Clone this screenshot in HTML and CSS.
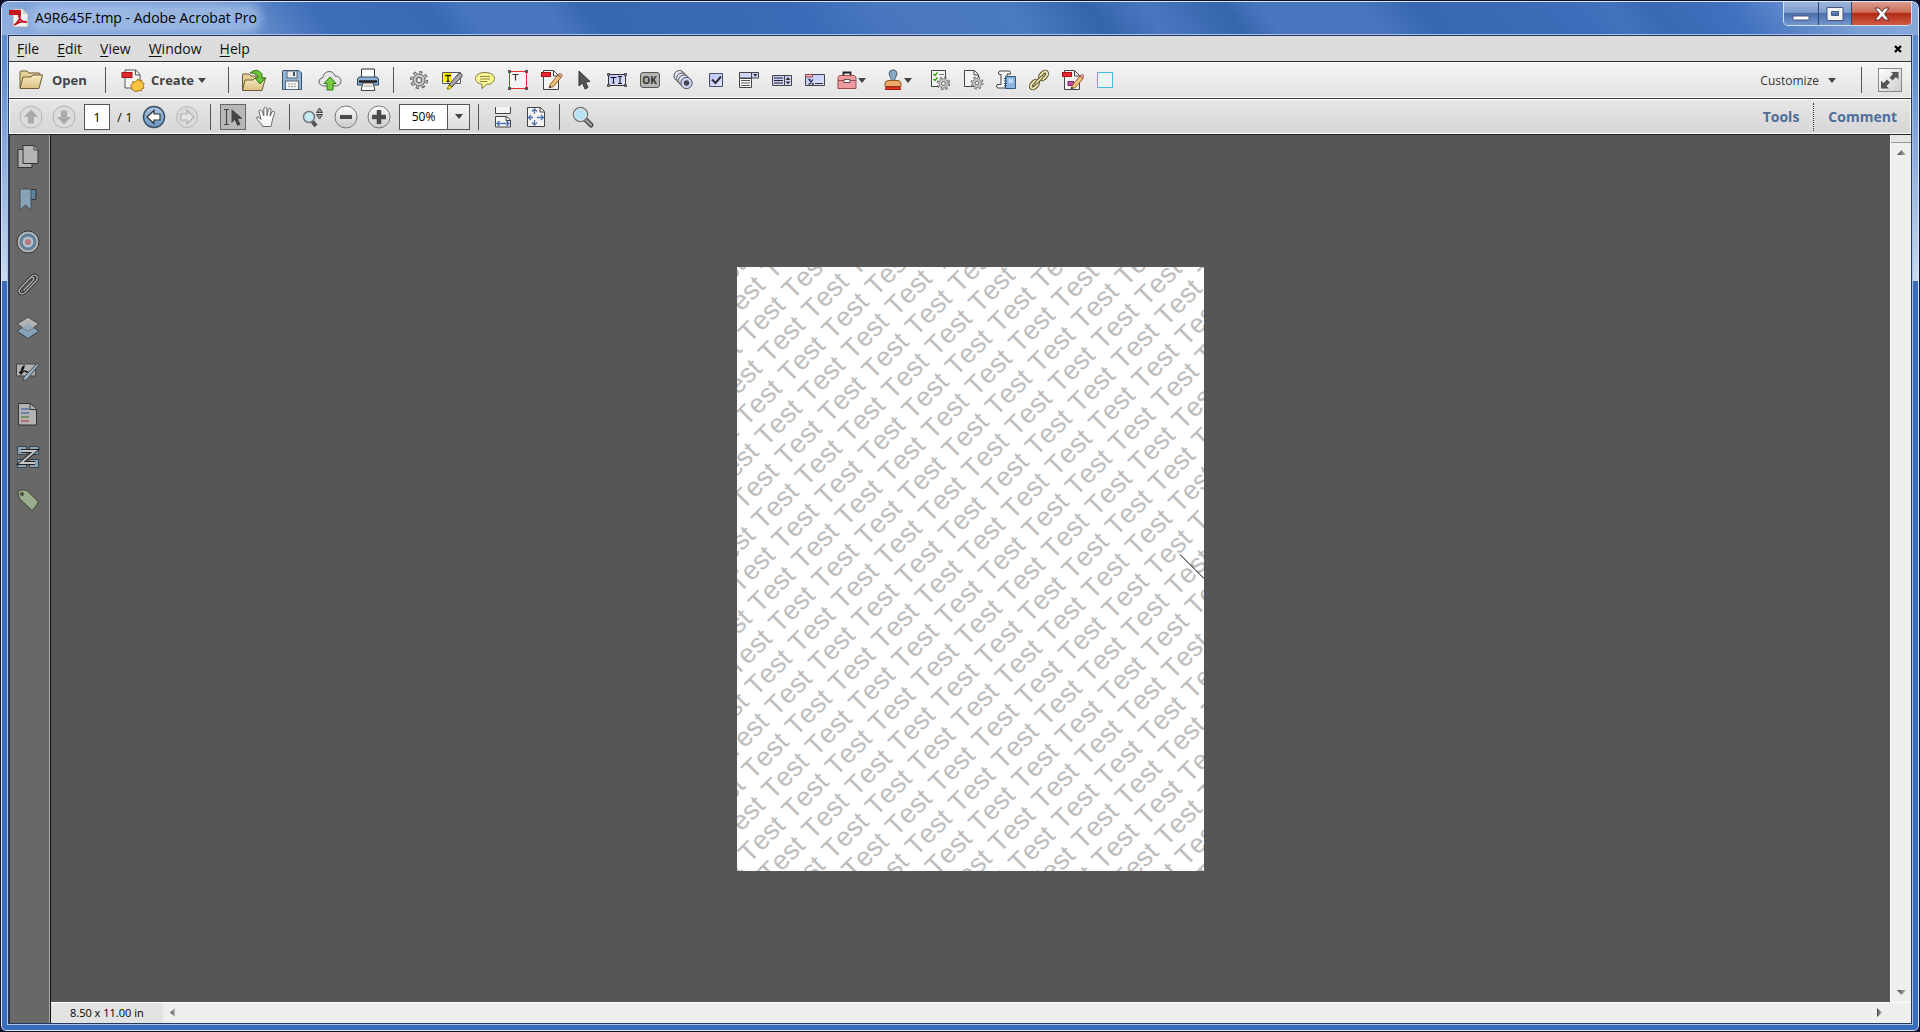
FILE: index.html
```html
<!DOCTYPE html>
<html lang="en">
<head>
    <meta charset="UTF-8">
    <meta name="viewport" content="width=device-width, initial-scale=1.0">
    <title>A9R645F.tmp - Adobe Acrobat Pro</title>
    <link rel="stylesheet" href="styles.css">
</head>
<body>
    <!-- shared gradients and shapes -->
    <svg class="defs" width="0" height="0" aria-hidden="true">
        <defs>
            <linearGradient id="gFolder" x1="0" y1="0" x2="0" y2="1"><stop offset="0" stop-color="#f7ebc0"/><stop offset="1" stop-color="#dcc183"/></linearGradient>
            <linearGradient id="gRound" x1="0" y1="0" x2="0" y2="1"><stop offset="0" stop-color="#fcfcfc"/><stop offset="1" stop-color="#c9c9c9"/></linearGradient>
            <linearGradient id="gBlue" x1="0" y1="0" x2="0" y2="1"><stop offset="0" stop-color="#a9c8e6"/><stop offset="1" stop-color="#6d97c4"/></linearGradient>
            <linearGradient id="gField" x1="0" y1="0" x2="1" y2="1"><stop offset="0" stop-color="#b9c0fa"/><stop offset="1" stop-color="#e4e7ff"/></linearGradient>
            <linearGradient id="gArrow" x1="0" y1="0" x2="1" y2="0"><stop offset="0" stop-color="#444"/><stop offset="1" stop-color="#bbb"/></linearGradient>
            <g id="gear">
                <circle r="7.2" fill="none" stroke="#555" stroke-width="3.6" stroke-dasharray="3 2.65"/>
                <circle r="6" fill="#bdbdbd" stroke="#555"/>
                <circle r="7" fill="none" stroke="#bdbdbd" stroke-width="2.2" stroke-dasharray="2 3.5" stroke-dashoffset="-.4"/>
                <circle r="5.4" fill="#c4c4c4"/>
                <circle r="2.6" fill="#eee" stroke="#666" stroke-width="1.3"/>
            </g>
            <path id="docPage" d="M4.500 2.500h10l5 5v14h-15z" fill="#f4f4f4" stroke="#444"/>
            <g id="pencil">
                <path d="M0 0l1.500-4 7.500-9 3 2.500-7.500 9z" fill="#f2c078" stroke="#80522c" stroke-width=".9"/>
                <path d="M9-13l3 2.500 1-1.200q.6-1.500-.6-2.200-1.200-.8-2.300-.4z" fill="#f0a0a0" stroke="#80522c" stroke-width=".7"/>
                <path d="M0 0l.8-2.200 1.200 1z" fill="#222"/>
            </g>
        </defs>
    </svg>

    <div class="window">
        <header class="titlebar">
            <svg class="app-icon" viewBox="0 0 20 20"><path d="M4 1h10l5 5v13H4z" fill="#f2f2f2" stroke="#aaa"/><path d="M14 1l5 5h-5z" fill="#c9c9c9"/><path d="M0 2h12v5H0z" fill="#c8141c"/><path d="M5 17c3-1 6-6 6-9 0-2-1.500-1.500-1 .5 1 4 4 6 8 5.500-3-1-8 0-12 2.500" fill="none" stroke="#c01018" stroke-width="1.700"/></svg>
            <h1 class="title">A9R645F.tmp - Adobe Acrobat Pro</h1>
            <div class="caption-buttons">
                <button class="caption-btn minimize" aria-label="Minimize"><svg width="18" height="8" viewBox="0 0 18 8"><rect x="1" y="2" width="16" height="4" rx="1" fill="#fff" stroke="#46557a"/></svg></button>
                <button class="caption-btn maximize" aria-label="Maximize"><svg width="18" height="14" viewBox="0 0 18 14"><path fill-rule="evenodd" d="M1 .5h16v13H1zM5.500 4.500h7v4h-7z" fill="#f4f4f4" stroke="#46557a"/></svg></button>
                <button class="caption-btn close" aria-label="Close"><svg width="16" height="14" viewBox="0 0 16 14"><path d="M1 1h4l3 3.500L11 1h4l-4.500 6 4.500 6h-4L8 9.500 5 13H1l4.500-6z" fill="#fff" stroke="#5b3038"/></svg></button>
            </div>
        </header>

        <div class="client">
            <nav class="menubar">
                <button class="menu"><u>F</u>ile</button>
                <button class="menu"><u>E</u>dit</button>
                <button class="menu"><u>V</u>iew</button>
                <button class="menu"><u>W</u>indow</button>
                <button class="menu"><u>H</u>elp</button>
                <button class="close-doc" aria-label="Close document"><svg width="8" height="8" viewBox="0 0 8 8"><path d="M1 1l6 6M7 1L1 7" stroke="#000" stroke-width="2.400"/></svg></button>
            </nav>

            <div class="toolbar">
                <button class="label-btn open"><svg class="ico" viewBox="0 0 24 24"><path d="M1 20V4q0-1 1-1h6l2 2h10q1 0 1 1v3" fill="#e4cf98" stroke="#6d5a33"/><path d="M1 20.500L4 9h8l2-2h9.500L20 20.500z" fill="url(#gFolder)" stroke="#6d5a33"/></svg><span>Open</span></button>
                <span class="sep"></span>
                <button class="label-btn create"><svg class="ico" viewBox="0 0 24 24"><path d="M4 2h11l4 4.500V20H4z" fill="#f4f4f4" stroke="#555"/><path d="M14.500 2v5H19" fill="none" stroke="#555"/><rect x="1" y="4.500" width="10" height="5" fill="#dd2a35" stroke="#a11"/><path d="M17 11l1.500 2 2.300-.7.200 2.400 2.200 1-1.200 2.100 1 2.200-2.300.7-.4 2.300-2.300-.5L14 24l-1.200-2-2.300-.4.400-2.300-1.500-1.900 2-1.300.3-2.400 2.400.4z" fill="#fbc343" stroke="#a9751a"/></svg><span>Create</span><i class="arrow"></i></button>
                <span class="sep"></span>
                <div class="group wide">
                    <button class="tool" aria-label="Open from"><svg class="ico" viewBox="0 0 24 24"><path d="M.5 22V7q0-1 1-1H7l2 2h8v3" fill="#e4cf98" stroke="#6d5a33"/><path d="M.5 22.500L3 12h8l2-2h10.500l-3.500 12.500z" fill="url(#gFolder)" stroke="#6d5a33"/><path d="M8 5q7-6 12 1v4h3.500L18 16l-5-6h3q0-5-8-5z" fill="#6cc33a" stroke="#2f7a12"/></svg></button>
                    <button class="tool" aria-label="Save"><svg class="ico" viewBox="0 0 24 24"><path d="M3 2.500h16l2.500 2.500v16.500h-19V3z" fill="#92b4d6" stroke="#34516f"/><rect x="7" y="3" width="10" height="7" fill="#eee" stroke="#567"/><rect x="13" y="4" width="2" height="4" fill="#34516f"/><rect x="5.500" y="13" width="13" height="8.500" fill="#f6f6f6" stroke="#567"/><path d="M8 16h8M8 18.500h8" stroke="#999" stroke-dasharray="2 1"/></svg></button>
                    <button class="tool" aria-label="Upload"><svg class="ico" viewBox="0 0 24 24"><path d="M5.500 18q-5-1-4.500-5 .5-3 4-3.500Q5.500 4 11 3.500q5 0 6 4.500 5 .2 6 4.500 0 4.500-4.500 5.500z" fill="#e6e6e6" stroke="#666"/><path d="M12 9l6 6.500h-3v6.500H9v-6.500H6z" fill="#78cb45" stroke="#2f7a12"/></svg></button>
                    <button class="tool" aria-label="Print"><svg class="ico" viewBox="0 0 24 24"><path d="M5.500 1h13v9h-13z" fill="#fafafa" stroke="#333"/><path d="M3 9h18l1.500 2v6h-21v-6z" fill="#8fb3d8" stroke="#2c4560"/><path d="M3 13.500h18" stroke="#222" stroke-width="2.500"/><path d="M7 15h10l2 7.500H5z" fill="#fafafa" stroke="#444"/><path d="M8 18h8" stroke="#999"/></svg></button>
                </div>
                <span class="sep"></span>
                <div class="group tools">
                    <button class="tool" aria-label="Preferences"><svg class="ico" viewBox="0 0 24 24"><use href="#gear" x="12" y="12"/></svg></button>
                    <button class="tool" aria-label="Highlight text"><svg class="ico" viewBox="0 0 24 24"><path d="M2.500 4.500h18v11h-18z" fill="#fafafa" stroke="#555"/><path d="M3 5h9v9H3z" fill="#fff200"/><path d="M5 7.500h6M8 7.500v6M6.500 13.500h3" stroke="#222" stroke-width="1.300" fill="none"/><path d="M9 17L18 6q2-1.500 3.500 0t0 3L12 19z" fill="#a6a6a6" stroke="#444"/><path d="M9 17l3 2-2.500 2H7z" fill="#ffe833" stroke="#7d7400"/></svg></button>
                    <button class="tool" aria-label="Sticky note"><svg class="ico" viewBox="0 0 24 24"><path d="M12 4.500c6 0 9.500 2.800 9.500 6s-3 6-8 6L9 20.500v-4.300c-4-.7-6.500-2.700-6.500-5.700 0-3.200 3.500-6 9.500-6z" fill="#fcf890" stroke="#7c7a40"/><path d="M7 8.500h10M7 11h10M7 13.500h7" stroke="#8a8448"/></svg></button>
                    <button class="tool" aria-label="Add text box"><svg class="ico" viewBox="0 0 24 24"><path d="M3.500 3.500h17v17h-17z" fill="#f4f4f4" stroke="#e03030"/><path d="M6.500 6.500h6M9.500 6.500v6" stroke="#333" stroke-width="1.200"/><path d="M2 2h3v3H2zM19 2h3v3h-3zM2 19h3v3H2zM19 19h3v3h-3z" fill="#555"/></svg></button>
                    <button class="tool" aria-label="Edit content"><svg class="ico" viewBox="0 0 24 24"><use href="#docPage"/><path d="M14.500 3v5h5" fill="none" stroke="#444"/><rect x="2.500" y="4.500" width="9" height="4" fill="#ee2335" stroke="#a11"/><use href="#pencil" x="10" y="20"/></svg></button>
                    <button class="tool" aria-label="Select object"><svg class="ico" viewBox="0 0 24 24"><path d="M7 3v15l3.500-3 2.500 6 3-1.500-2.500-5.500 4.500-.5z" fill="#555" stroke="#333"/></svg></button>
                    <button class="tool" aria-label="Text field"><svg class="ico" viewBox="0 0 24 24"><path d="M3.500 6.500h17v11h-17z" fill="url(#gField)" stroke="#333"/><path d="M5.500 9.500h6M8.500 9.500V15M7.300 15h2.400M13 8.500h4M13 15.500h4M15 9v7" stroke="#111" stroke-width="1.100"/><path d="M2.500 5.500h2v2h-2zM19.500 5.500h2v2h-2zM2.500 16.500h2v2h-2zM19.500 16.500h2v2h-2z" fill="#999" stroke="#444"/></svg></button>
                    <button class="tool" aria-label="Button field"><span class="ok-key">OK</span></button>
                    <button class="tool" aria-label="Radio button"><svg class="ico" viewBox="0 0 24 24"><g fill="#dfe3f8" stroke="#555"><circle cx="8.500" cy="8" r="5.500"/><circle cx="11" cy="10.500" r="5.500"/><circle cx="13" cy="12.500" r="5.500"/><circle cx="15.500" cy="15" r="5.700" fill="#c9cff5"/></g><circle cx="15.500" cy="15" r="2.700" fill="#444"/></svg></button>
                    <button class="tool" aria-label="Check box field"><svg class="ico" viewBox="0 0 24 24"><path d="M5.500 5.500h13v13h-13z" fill="url(#gField)" stroke="#4a4f6c"/><path d="M8 11.500l3.500 3.500L17 8.500" fill="none" stroke="#333" stroke-width="2.200"/></svg></button>
                    <button class="tool" aria-label="Drop-down field"><svg class="ico" viewBox="0 0 24 24"><path d="M2.500 10.500h12v9h-12z" fill="#fff" stroke="#444"/><path d="M2.500 4.500h12v5.500h-12zM14.500 4.500h7v5.500h-7z" fill="#cfd4fc" stroke="#444"/><path d="M16 6h4.500L18.200 8.800z" fill="#333"/><path d="M4 12.500h9M4 15h9M4 17.500h9" stroke="#555"/></svg></button>
                    <button class="tool" aria-label="List box field"><svg class="ico" viewBox="0 0 24 24"><path d="M2.500 7.500h19v10h-19zM14.500 7.500v10" fill="url(#gField)" stroke="#444"/><path d="M4 10h9M4 12.500h9M4 15h9" stroke="#222"/><path d="M15.500 12L18 9l2.500 3zM15.500 13.500L18 16.500l2.500-3z" fill="#333"/></svg></button>
                    <button class="tool" aria-label="Signature field"><svg class="ico" viewBox="0 0 24 24"><path d="M2.500 6.500h19v11h-19z" fill="url(#gField)" stroke="#444"/><path d="M2.500 6.500h7V9h-7z" fill="#f2b6bd" stroke="#944"/><path d="M6 11.500l4 5M10 11.500l-4 5M5.500 11.500h2M5.500 16h2M9 16h2" stroke="#111" stroke-width="1.200"/><path d="M12 15.500h8" stroke="#333"/></svg></button>
                    <button class="tool drop" aria-label="Toolbox"><svg class="ico" viewBox="0 0 24 24"><path d="M8.500 7.500V4.500h7v3" fill="none" stroke="#222" stroke-width="1.800"/><path d="M4.500 7.500h15q1.500 1 1.500 3v10H3v-10q0-2 1.500-3z" fill="#ee9a9e" stroke="#9b4a50"/><path d="M3 12.500h18" stroke="#9b4a50"/><path d="M9 11.500h6v3H9z" fill="#fafafa" stroke="#555"/></svg><i class="arrow"></i></button>
                    <button class="tool drop" aria-label="Stamp"><svg class="ico" viewBox="0 0 24 24"><path d="M10 13q1-2-1-4.500-2-3 0-5.500 3-2.500 6 0 2 2.500 0 5.500-2 2.500-1 4.500z" fill="#8aa9c3" stroke="#4a6074"/><path d="M7 12.500h10q3 .5 3 3v3H4v-3q0-2.500 3-3z" fill="#eba868" stroke="#8a5524"/><path d="M5 19h14l.5 2.500h-15z" fill="#ee3a24" stroke="#991a0c"/></svg><i class="arrow"></i></button>
                    <button class="tool" aria-label="Action wizard"><svg class="ico" viewBox="0 0 24 24"><path d="M3.500 2.500h14v16h-14z" fill="#f4f4f4" stroke="#444"/><path d="M5.500 6l1.500 1.500L9.500 4.500M5.500 11L7 12.500 9.500 9.500" fill="none" stroke="#35a012" stroke-width="1.400"/><path d="M11 6.500h5" stroke="#777"/><use href="#gear" transform="translate(15.500 15.500) scale(.75)"/></svg></button>
                    <button class="tool" aria-label="Document settings"><svg class="ico" viewBox="0 0 24 24"><path d="M3.500 2.500h10l4 4v12h-14z" fill="#f4f4f4" stroke="#444"/><path d="M13 3v4h4" fill="none" stroke="#444"/><use href="#gear" transform="translate(16 15) scale(.72)"/></svg></button>
                    <button class="tool" aria-label="JavaScript"><svg class="ico" viewBox="0 0 24 24"><path d="M6 3q-1.500 0-1.500 2T6 6.500h1v10H4q-1.500 0-1.500 1.500T4 20h9V6h3.500V4.500Q16.500 3 15 3z" fill="#f4f4f4" stroke="#444"/><path d="M11.500 8.500h10v12h-10z" fill="#8cb6df" stroke="#2d577f"/><path d="M14.500 11h4.500v4h-4.500z" fill="#bcd8f2"/><path d="M10 10.500h3M10 13h3M10 15.500h3M10 18h3" stroke="#2d577f"/></svg></button>
                    <button class="tool" aria-label="Link"><svg class="ico" viewBox="0 0 24 24"><g fill="none" stroke="#5b5232" stroke-width="4"><ellipse cx="7.500" cy="16.500" rx="4.500" ry="2.500" transform="rotate(-48 7.500 16.500)"/><ellipse cx="16.500" cy="7.500" rx="4.500" ry="2.500" transform="rotate(-48 16.500 7.500)"/></g><g fill="none" stroke="#f3e9ae" stroke-width="1.900"><ellipse cx="7.500" cy="16.500" rx="4.500" ry="2.500" transform="rotate(-48 7.500 16.500)"/><ellipse cx="16.500" cy="7.500" rx="4.500" ry="2.500" transform="rotate(-48 16.500 7.500)"/></g><path d="M9 15l6-6" stroke="#5b5232" stroke-width="3.600"/><path d="M9 15l6-6" stroke="#f3e9ae" stroke-width="1.600"/></svg></button>
                    <button class="tool" aria-label="Edit object"><svg class="ico" viewBox="0 0 24 24"><use href="#docPage"/><path d="M14.500 3v5h5" fill="none" stroke="#444"/><rect x="2.500" y="4.500" width="9" height="4" fill="#ee2335" stroke="#a11"/><rect x="8" y="13.500" width="5.500" height="4" fill="#c84aa8" stroke="#80286a"/><use href="#pencil" x="11" y="21"/></svg></button>
                    <button class="tool" aria-label="Blank tool"><span class="blank-key"></span></button>
                </div>
                <div class="right">
                    <button class="customize">Customize<i class="arrow"></i></button>
                    <span class="sep"></span>
                    <button class="read-mode" aria-label="Read mode"><svg width="22" height="22" viewBox="0 0 22 22"><path d="M12 3h7.500v7.500L17 8l-3.500 3.500-3-3L14 5zM2 11.500L4.500 14 8 10.500l3 3L7.500 17l2.500 2.500H2z" fill="#555"/></svg></button>
                </div>
            </div>

            <div class="toolbar second">
                <div class="group pages">
                    <button class="tool" aria-label="Previous page" disabled><svg class="ico" viewBox="0 0 24 24"><circle cx="12" cy="12" r="11" fill="#dcdcdc" stroke="#b4b4b4"/><path d="M12 4.500l7 7.500h-4v6.500H9V12H5z" fill="#aaa"/></svg></button>
                    <button class="tool" aria-label="Next page" disabled><svg class="ico" viewBox="0 0 24 24"><circle cx="12" cy="12" r="11" fill="#dcdcdc" stroke="#b4b4b4"/><path d="M12 19.500L19 12h-4V5.500H9V12H5z" fill="#aaa"/></svg></button>
                    <label class="page-box"><input class="page-input" type="text" value="1" aria-label="Page"><span>/ 1</span></label>
                    <button class="tool" aria-label="Previous view"><svg class="ico" viewBox="0 0 24 24"><circle cx="12" cy="12" r="10.500" fill="url(#gBlue)" stroke="#3d4f63" stroke-width="1.500"/><path d="M5 12l7-6.500V9h6v6h-6v3.500z" fill="#fff" stroke="#333" stroke-width="1.200"/></svg></button>
                    <button class="tool" aria-label="Next view" disabled><svg class="ico" viewBox="0 0 24 24"><circle cx="12" cy="12" r="10.500" fill="#dadada" stroke="#b8b8b8"/><path d="M19 12l-7-6.500V9H6v6h6v3.500z" fill="#e6e6e6" stroke="#b0b0b0" stroke-width="1.200"/></svg></button>
                </div>
                <span class="sep"></span>
                <div class="group modes">
                    <button class="tool pressed" aria-label="Select"><svg class="ico" viewBox="0 0 24 24"><path d="M3 4.500h5M5.500 5v14M3 19.500h5" stroke="#444" stroke-width="1.200"/><path d="M10.500 4v14l3.300-3 2.700 6 3-1.500-2.500-5.500 4.500-.5z" fill="#444"/></svg></button>
                    <button class="tool" aria-label="Hand"><svg class="ico" viewBox="0 0 24 24"><path d="M8.500 21.500q-.5-2-3-4.500T2.500 12.500q1.500-1.700 3.500 1L7 14.500 5 6.500q0-1.800 1.500-1.500T8.500 7L9.800 11V4q.2-1.700 1.600-1.600T13 4v6.500l1.300-6q.5-1.500 1.800-1.200T17 5.500L16 11l2-4q.9-1.200 2-.5t.5 2.200q-2 5-2.500 8-.3 2.500-1 4.800z" fill="#fafafa" stroke="#666"/></svg></button>
                </div>
                <span class="sep"></span>
                <div class="group zoom">
                    <button class="tool" aria-label="Marquee zoom"><svg class="ico" viewBox="0 0 24 24"><path d="M11 16l4 5" stroke="#555" stroke-width="4"/><circle cx="8" cy="12" r="5.500" fill="#c6ebf6" stroke="#777" stroke-width="1.500"/><path d="M15.500 7.500L18.500 3l3 4.500zM15.500 9.500l3 4.500 3-4.500z" fill="#999" stroke="#444"/></svg></button>
                    <button class="tool" aria-label="Zoom out"><svg class="ico" viewBox="0 0 24 24"><circle cx="12" cy="12" r="11" fill="url(#gRound)" stroke="#777"/><path d="M6 12h12" stroke="#4a4a4a" stroke-width="4"/></svg></button>
                    <button class="tool" aria-label="Zoom in"><svg class="ico" viewBox="0 0 24 24"><circle cx="12" cy="12" r="11" fill="url(#gRound)" stroke="#777"/><path d="M5 12h14M12 5v14" stroke="#4a4a4a" stroke-width="4.500"/></svg></button>
                    <div class="combo"><input class="zoom-input" type="text" value="50%" aria-label="Zoom"><button class="combo-btn" aria-label="Zoom levels"><i class="arrow"></i></button></div>
                </div>
                <span class="sep"></span>
                <div class="group">
                    <button class="tool" aria-label="Fit width"><svg class="ico" viewBox="0 0 24 24"><path d="M4.500 2v6.500h15V2M4.500 22V11.500h11l4 3.500V22z" fill="#f4f4f4" stroke="#444"/><path d="M15 11.500v4h4.500" fill="none" stroke="#444"/><path d="M6 18.500h12M8.500 16L6 18.500 8.500 21M15.500 16l2.500 2.500-2.500 2.500" fill="none" stroke="#4f73b0" stroke-width="1.400"/></svg></button>
                    <button class="tool" aria-label="Fit page"><svg class="ico" viewBox="0 0 24 24"><path d="M3.500 2.500h13l4 4v15h-17z" fill="#f4f4f4" stroke="#444"/><path d="M16 3v4h4" fill="none" stroke="#444"/><path d="M10.500 9V4.500M8 6.500l2.500-2.500L13 6.500M10.500 15v4.500M8 17.500l2.500 2.500 2.500-2.500M9 12.500H5M7 10l-2.500 2.500L7 15M13 12.500h6M17 10l2.500 2.500L17 15" fill="none" stroke="#4f73b0" stroke-width="1.300"/></svg></button>
                </div>
                <span class="sep"></span>
                <div class="group zoom">
                    <button class="tool" aria-label="Find"><svg class="ico" viewBox="0 0 24 24"><path d="M14 14l6 6" stroke="#444" stroke-width="5" stroke-linecap="round"/><path d="M14 14l6 6" stroke="#999" stroke-width="2.500" stroke-linecap="round"/><circle cx="9.500" cy="9.500" r="7" fill="#b5e3f3" stroke="#777" stroke-width="1.500"/><circle cx="9.500" cy="9.500" r="5.800" fill="none" stroke="#eee"/></svg></button>
                </div>
                <div class="right panes">
                    <button class="pane-btn">Tools</button>
                    <span class="dots"></span>
                    <button class="pane-btn">Comment</button>
                </div>
            </div>

            <main class="workspace">
                <aside class="sidebar">
                    <button class="side-btn" aria-label="Page thumbnails"><svg class="ico" viewBox="0 0 24 24"><path d="M2 5.500h14v18H2z" fill="#b0b0b0" stroke="#333"/><path d="M7 1.500h11l4 4v14H7z" fill="#b4b4b4" stroke="#333"/><path d="M18 2v4h4" fill="none" stroke="#444"/></svg></button>
                    <button class="side-btn" aria-label="Bookmarks"><svg class="ico" viewBox="0 0 24 24"><path d="M14 2.500h6v10h-6z" fill="#5d8299" stroke="#333"/><path d="M4 2h11v21l-5.500-5L4 23z" fill="#86a3b8" stroke="#40525e"/></svg></button>
                    <button class="side-btn" aria-label="Destinations"><svg class="ico" viewBox="0 0 24 24"><circle cx="12" cy="12" r="11" fill="#b4b4b4" stroke="#333"/><circle cx="12" cy="12" r="7" fill="#aebfca" stroke="#5e7f97" stroke-width="3"/><circle cx="12" cy="12" r="3" fill="#b97475"/></svg></button>
                    <button class="side-btn" aria-label="Attachments"><svg class="ico" viewBox="0 0 24 24"><g fill="none" stroke-linecap="round"><path d="M8 17l9-9.500q1.500-2 .3-3t-3 .5L4.500 15q-2.500 3-.5 5t5-.5L20 8q2.500-3 .5-5t-5 .5L7 12.500" stroke="#333" stroke-width="3.200"/><path d="M8 17l9-9.500q1.500-2 .3-3t-3 .5L4.500 15q-2.500 3-.5 5t5-.5L20 8q2.500-3 .5-5t-5 .5L7 12.500" stroke="#a8a8a8" stroke-width="1.400"/></g></svg></button>
                    <button class="side-btn" aria-label="Layers"><svg class="ico" viewBox="0 0 24 24"><path d="M12 8l11 7-11 7.500L1 15z" fill="#84a3bb" stroke="#444"/><path d="M12 1l11 7-11 7L1 8z" fill="#b2b2b2" stroke="#444"/><path d="M12 7.500l6 4L12 15l-6-3.500z" fill="#93a9b7"/></svg></button>
                    <button class="side-btn" aria-label="Signatures"><svg class="ico" viewBox="0 0 24 24"><path d="M.5 5h19v12H.5z" fill="#b0b0b0" stroke="#444"/><path d="M3 14q5-3 5-7-3 2-3 8 3-4 4-3t3 1" fill="none" stroke="#111" stroke-width="1.300"/><path d="M7 22l1-4L20 5.500q2-1.500 3.500-.5L11 20.500z" fill="#95adbd" stroke="#3d4b55"/></svg></button>
                    <button class="side-btn" aria-label="Content"><svg class="ico" viewBox="0 0 24 24"><path d="M2.500 1.500h12l6 5.500v16h-18z" fill="#b2b2b2" stroke="#333"/><path d="M14 2v5.500h6" fill="none" stroke="#333"/><path d="M5 7h8" stroke="#6a84a3" stroke-width="2"/><path d="M5 11h8" stroke="#6a84a3" stroke-width="2"/><path d="M5 15h8" stroke="#729266" stroke-width="2"/><path d="M5 19h8" stroke="#b36b6b" stroke-width="2"/></svg></button>
                    <button class="side-btn" aria-label="Order"><svg class="ico" viewBox="0 0 24 24"><path d="M1.500 1.500h9v8h-9zM13.500 1.500h9v8h-9zM1.500 14.500h9v8h-9zM13.500 14.500h9v8h-9z" fill="#86a3b8" stroke="#38444d"/><path d="M5 6h14L5 18h14" fill="none" stroke="#222" stroke-width="4"/><path d="M5 6h14L5 18h14" fill="none" stroke="#c4c4c4" stroke-width="2"/></svg></button>
                    <button class="side-btn" aria-label="Tags"><svg class="ico" viewBox="0 0 24 24"><path d="M2 3q6-2 9-.5L22 13.500q1 1.500-6 9L4 11Q2 9 2 3z" fill="#9bad8d" stroke="#3f4838"/><circle cx="6" cy="6" r="2" fill="#4a4f45"/></svg></button>
                </aside>

                <section class="viewer">
                    <div class="document">
                        <svg class="page" viewBox="0 0 467 604">
                            <g id="watermark" class="watermark"></g>
                            <path d="M443 287.500L467 311.500" stroke="#000"/>
                        </svg>
                    </div>
                    <div class="vscroll">
                        <span class="splitter"></span>
                        <button class="scroll-btn" aria-label="Scroll up"><svg width="9" height="5" viewBox="0 0 9 5"><path d="M0 5l4.500-5L9 5z" fill="url(#gArrow)"/></svg></button>
                        <button class="scroll-btn bottom" aria-label="Scroll down"><svg width="9" height="5" viewBox="0 0 9 5"><path d="M0 0l4.500 5L9 0z" fill="url(#gArrow)"/></svg></button>
                    </div>
                    <div class="status">
                        <span class="page-size">8.50 x 11.00 in</span>
                        <div class="hscroll">
                            <button class="scroll-btn" aria-label="Scroll left"><svg width="5" height="9" viewBox="0 0 5 9"><path d="M5 0L0 4.500 5 9z" fill="url(#gArrow)"/></svg></button>
                            <button class="scroll-btn" aria-label="Scroll right"><svg width="5" height="9" viewBox="0 0 5 9"><path d="M0 0l5 4.500L0 9z" fill="url(#gArrow)"/></svg></button>
                        </div>
                    </div>
                </section>
            </main>
        </div>
    </div>

    <script>
        // Repeat the word along 45 degree lines: one step along the line, one step to the next line
        const watermark = document.getElementById('watermark');
        const word = 'Test';
        const alongStep = 130 / 3;
        const lineStep = 20;
        const startX = 12.5;
        const startY = 77;

        for (let line = -20; line < 40; line++) {
            for (let i = -16; i < 16; i++) {
                const x = startX + line * lineStep + i * alongStep;
                const y = startY + line * lineStep - i * alongStep;
                // skip words that lie fully off the page
                if (x < -36 || x > 478 || y < 2 || y > 652) {
                    continue;
                }
                const text = document.createElementNS('http://www.w3.org/2000/svg', 'text');
                text.setAttribute('transform', 'translate(' + x + ' ' + y + ') rotate(-45)');
                text.textContent = word;
                watermark.appendChild(text);
            }
        }
    </script>
</body>
</html>
```
FILE: styles.css
```css
* {
    box-sizing: border-box;
}
body {
    margin: 0;
    font-family: "Open Sans", "Noto Sans", sans-serif;
    font-size: 14px;
    color: #111;
    background: #0a0f2c;
}
button {
    font: inherit;
    color: inherit;
    border: none;
    background: none;
    padding: 0;
    margin: 0;
}
svg {
    display: block;
}
.defs {
    position: absolute;
}
.ico {
    width: 24px;
    height: 24px;
    flex: none;
}

/* window frame */
.window {
    display: flex;
    flex-direction: column;
    height: 100vh;
    padding: 0 7px 7px;
    border: 1px solid #0b1230;
    border-radius: 8px 8px 6px 6px;
    box-shadow: inset 0 0 0 1px #dbe6f5;
    background: linear-gradient(to bottom, #5f8ccd 0, #5f8ccd 60px, #c9d9ee 280px, #3a6cbc 280px, #3a6cbc 100%);
    overflow: hidden;
}
.titlebar {
    display: flex;
    align-items: center;
    height: 33px;
    margin: 1px -6px 0;
    padding: 0 6px 2px 7px;
    flex: none;
    border-radius: 6px 6px 0 0;
    background: linear-gradient(53deg, #93b1df 0, #7ba0d8 3%, #6f97d3 12%, #3e6eb9 17%, #3969b5 23%, #4877c0 25%, #4877c0 29%, #3767ae 31%, #3a6bb8 42%, #4877bf 46%, #4a7abf 53%, #3464aa 57%, #4877c0 60%, #3565ab 64%, #4877c0 66%, #4877c0 71%, #3767b0 74%, #3b6dba 82%, #4272bd 84%, #3969b3 86%, #4070bf 90%, #7ba0d6 96%, #8aa9d8 100%);
}
.app-icon {
    width: 20px;
    height: 20px;
}
.title {
    margin: 0 0 0 6px;
    font-size: 14px;
    font-weight: 400;
    line-height: 20px;
    color: #000;
    background: rgba(190, 210, 240, 0.5);
    box-shadow: 0 0 8px 5px rgba(190, 210, 240, 0.5);
    border-radius: 8px;
}
.caption-buttons {
    display: flex;
    align-self: flex-start;
    height: 24px;
    margin-left: auto;
    border: 1px solid #d3e0f2;
    border-top: none;
    border-radius: 0 0 5px 5px;
    overflow: hidden;
}
.caption-btn {
    display: flex;
    align-items: center;
    justify-content: center;
    width: 35px;
    background: linear-gradient(#9db5dc 0, #7e9ccd 45%, #4b70ad 50%, #7396cd 100%);
    border-right: 1px solid #33466f;
}
.minimize {
    align-items: flex-end;
    padding-bottom: 3px;
}
.caption-btn.maximize {
    width: 33px;
}
.caption-btn.close {
    width: 59px;
    border-right: none;
    background: linear-gradient(#dc9c90 0, #cd6a58 45%, #b52a18 50%, #cf5a42 100%);
}

/* everything inside the frame */
.client {
    display: flex;
    flex-direction: column;
    flex: 1;
    min-height: 0;
    border: 1px solid #25375e;
    box-shadow: 0 0 0 1px #a9c2e6;
    background: #ddd;
}
.menubar {
    display: flex;
    align-items: center;
    height: 25px;
    flex: none;
    padding: 0 9px 0 8px;
    gap: 18px;
    background: #ddd;
}
.menu {
    line-height: 20px;
}
.menu u {
    text-underline-offset: 2px;
}
.close-doc {
    margin-left: auto;
}
.toolbar {
    display: flex;
    align-items: center;
    height: 37px;
    flex: none;
    border-top: 1px solid #333;
    box-shadow: inset 1px 1px 0 #fff, inset -1px -1px 0 #fff;
    background: linear-gradient(#f5f5f5, #e2e2e2);
    padding-left: 1px;
}
.toolbar.second {
    border-bottom: 1px solid #222;
    background: linear-gradient(#e6e6e6, #d6d6d6);
}
.sep {
    width: 1px;
    height: 26px;
    flex: none;
    background: #555;
}
.arrow {
    border: 4px solid transparent;
    border-top: 5px solid #444;
    border-bottom: none;
    flex: none;
}
.label-btn {
    display: flex;
    align-items: center;
    font-size: 13px;
    font-weight: 700;
    color: #444;
}
.open {
    width: 95px;
    padding-left: 9px;
    gap: 9px;
}
.create {
    width: 122px;
    padding-left: 15px;
    gap: 6px;
}
.create .arrow {
    margin-left: -2px;
}
.group {
    display: flex;
    align-items: center;
    padding: 0 7px;
}
.tool {
    display: flex;
    align-items: center;
    justify-content: center;
    width: 33px;
    height: 28px;
    flex: none;
}
.wide {
    padding: 0 6px;
}
.wide .tool {
    width: 38px;
}
.tools {
    padding: 0 8px;
}
.tool.drop {
    width: 46px;
    justify-content: flex-start;
    padding-left: 4px;
}
.drop .arrow {
    margin-left: -1px;
}
.ok-key {
    width: 20px;
    height: 16px;
    border: 1px solid #555;
    border-radius: 3px;
    background: #b4b4b4;
    font-size: 10px;
    font-weight: 700;
    line-height: 14px;
    color: #333;
}
.blank-key {
    width: 16px;
    height: 16px;
    border: 1px solid #49b8dc;
    background: #f1f1f1;
}
.right {
    display: flex;
    align-items: center;
    margin-left: auto;
    padding-right: 9px;
}
.customize {
    display: flex;
    align-items: center;
    gap: 9px;
    margin-right: 25px;
    font-size: 12px;
    color: #333;
}
.read-mode {
    display: flex;
    align-items: center;
    justify-content: center;
    width: 24px;
    height: 24px;
    margin-left: 16px;
    border: 1px solid #888;
    background: linear-gradient(135deg, #fff, #ccc);
}
.pages {
    padding-left: 4px;
}
.page-box {
    display: flex;
    align-items: center;
    width: 57px;
    padding-left: 4px;
    gap: 7px;
    font-size: 13px;
}
.page-input, .zoom-input {
    width: 26px;
    height: 26px;
    padding: 0;
    border: 1px solid #555;
    background: #fff;
    font: inherit;
    font-size: 13px;
    text-align: center;
}
.modes {
    padding-left: 9px;
}
.tool.pressed {
    width: 26px;
    height: 26px;
    margin-right: 3px;
    border: 1px solid #666;
    background: #b8b8b8;
}
.zoom {
    padding: 0 6px;
}
.combo {
    display: flex;
    margin: 0 2px 0 4px;
}
.zoom-input {
    width: 49px;
    font-size: 12px;
}
.combo-btn {
    display: flex;
    align-items: center;
    justify-content: center;
    width: 22px;
    border: 1px solid #555;
    border-left: none;
    background: linear-gradient(#f6f6f6, #dcdcdc);
}
.panes {
    padding-right: 14px;
}
.pane-btn {
    font-size: 14px;
    font-weight: 700;
    color: #4d6d9c;
}
.dots {
    height: 28px;
    margin: 0 14px;
    border-left: 1px dotted #333;
}

/* document area */
.workspace {
    display: flex;
    flex: 1;
    min-height: 0;
}
.sidebar {
    display: flex;
    flex-direction: column;
    align-items: center;
    width: 42px;
    flex: none;
    padding: 9px 4px 0 0;
    gap: 19px;
    background: #686868;
    border-left: 1px solid #333;
    border-right: 1px solid #111;
    box-shadow: inset -1px 0 0 #aaa;
}
.side-btn {
    height: 24px;
}
.viewer {
    display: grid;
    grid-template-columns: 1fr 21px;
    grid-template-rows: 1fr 21px;
    flex: 1;
    min-width: 0;
}
.document {
    display: flex;
    align-items: center;
    justify-content: center;
    background: #565656;
    min-height: 0;
}
.page {
    width: 467px;
    height: 604px;
    background: #fff;
    overflow: hidden;
}
.watermark {
    font-family: "Liberation Sans", Arial, sans-serif;
    font-size: 27px;
    font-kerning: none;
    fill: #bdbdbd;
}
.vscroll {
    display: flex;
    flex-direction: column;
    align-items: center;
    background: #efefef;
    border-left: 1px solid #fff;
}
.splitter {
    width: 100%;
    height: 8px;
    flex: none;
    background: #e6e6e6;
    border-bottom: 1px solid #999;
}
.scroll-btn {
    display: flex;
    align-items: center;
    justify-content: center;
    width: 19px;
    height: 19px;
}
.scroll-btn.bottom {
    margin-top: auto;
}
.status {
    grid-column: 1 / 3;
    display: flex;
    align-items: center;
    border-top: 1px solid #fff;
    background: #e3e3e3;
}
.page-size {
    width: 112px;
    padding-left: 19px;
    font-size: 11px;
    line-height: 16px;
    white-space: nowrap;
    color: #000;
}
.hscroll {
    display: flex;
    flex: 1;
    height: 100%;
    justify-content: space-between;
    padding-right: 22px;
    background: #efefef;
}
```
